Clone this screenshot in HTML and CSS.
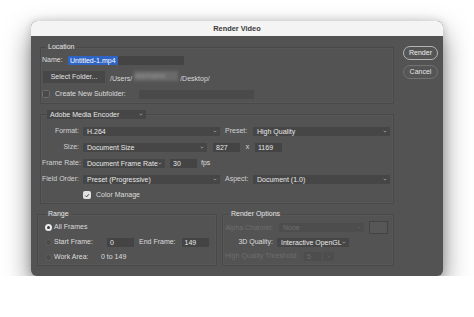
FILE: index.html
```html
<!DOCTYPE html>
<html lang="en">
<head>
    <meta charset="UTF-8">
    <title>Render Video</title>
    <link rel="stylesheet" href="styles.css">
</head>
<body>
<div class="page">
    <div class="dialog">
        <div class="titlebar">Render Video</div>
        <div class="content">
            <div class="main">
                <!-- Location -->
                <fieldset class="group location">
                    <legend>Location</legend>
                    <div class="row">
                        <span class="name-label">Name:</span>
                        <span class="field name-field"><span class="selected">Untitled-1.mp4</span></span>
                    </div>
                    <div class="row">
                        <span class="folder-btn">Select Folder...</span>
                        <span class="path">/Users/<span class="blurred">username</span>/Desktop/</span>
                    </div>
                    <div class="row">
                        <span class="check"></span>
                        <span class="check-label">Create New Subfolder:</span>
                        <span class="field subfolder-field"></span>
                    </div>
                </fieldset>

                <!-- Encoder -->
                <fieldset class="group encoder">
                    <legend class="select encoder-select">Adobe Media Encoder
                        <svg class="chev" viewBox="0 0 6 4"><path d="M1 1l2 2 2-2"/></svg>
                    </legend>
                    <div class="row">
                        <span class="lbl">Format:</span>
                        <span class="select w137">H.264 <svg class="chev" viewBox="0 0 6 4"><path d="M1 1l2 2 2-2"/></svg></span>
                        <span class="side-lbl">Preset:</span>
                        <span class="select w137">High Quality <svg class="chev" viewBox="0 0 6 4"><path d="M1 1l2 2 2-2"/></svg></span>
                    </div>
                    <div class="row">
                        <span class="lbl">Size:</span>
                        <span class="select w124">Document Size <svg class="chev" viewBox="0 0 6 4"><path d="M1 1l2 2 2-2"/></svg></span>
                        <span class="field num gap6">827</span>
                        <span class="times">x</span>
                        <span class="field num">1169</span>
                    </div>
                    <div class="row">
                        <span class="lbl">Frame Rate:</span>
                        <span class="select w82">Document Frame Rate <svg class="chev" viewBox="0 0 6 4"><path d="M1 1l2 2 2-2"/></svg></span>
                        <span class="field num gap5">30</span>
                        <span class="unit">fps</span>
                    </div>
                    <div class="row">
                        <span class="lbl">Field Order:</span>
                        <span class="select w137">Preset (Progressive) <svg class="chev" viewBox="0 0 6 4"><path d="M1 1l2 2 2-2"/></svg></span>
                        <span class="side-lbl">Aspect:</span>
                        <span class="select w137">Document (1.0) <svg class="chev" viewBox="0 0 6 4"><path d="M1 1l2 2 2-2"/></svg></span>
                    </div>
                    <div class="row manage-row">
                        <span class="check checked"><svg viewBox="0 0 8 8"><path d="M1.8 4.2l1.6 1.6 3-3.4"/></svg></span>
                        <span class="check-label">Color Manage</span>
                    </div>
                </fieldset>

                <div class="bottom">
                    <!-- Range -->
                    <fieldset class="group range">
                        <legend>Range</legend>
                        <div class="row">
                            <span class="radio on"></span>
                            <span class="radio-label">All Frames</span>
                        </div>
                        <div class="row">
                            <span class="radio"></span>
                            <span class="radio-label start-lbl">Start Frame:</span>
                            <span class="field num">0</span>
                            <span class="end-lbl">End Frame:</span>
                            <span class="field num">149</span>
                        </div>
                        <div class="row">
                            <span class="radio"></span>
                            <span class="radio-label work-lbl">Work Area:</span>
                            <span class="value">0 to 149</span>
                        </div>
                    </fieldset>

                    <!-- Render Options -->
                    <fieldset class="group options">
                        <legend>Render Options</legend>
                        <div class="row alpha-row">
                            <span class="opt-lbl off">Alpha Channel:</span>
                            <span class="select off w85">None <svg class="chev" viewBox="0 0 6 4"><path d="M1 1l2 2 2-2"/></svg></span>
                            <span class="swatch"></span>
                        </div>
                        <div class="row">
                            <span class="opt-lbl">3D Quality:</span>
                            <span class="select w72">Interactive OpenGL <svg class="chev" viewBox="0 0 6 4"><path d="M1 1l2 2 2-2"/></svg></span>
                        </div>
                        <div class="row">
                            <span class="threshold-lbl off">High Quality Threshold:</span>
                            <span class="stepper off"><span class="step-val">5</span><span class="step-btn"><svg class="chev" viewBox="0 0 6 4"><path d="M1 1l2 2 2-2"/></svg></span></span>
                        </div>
                    </fieldset>
                </div>
            </div>

            <div class="buttons">
                <span class="pill default">Render</span>
                <span class="pill">Cancel</span>
            </div>
        </div>
    </div>
</div>
</body>
</html>
```

FILE: styles.css
```css
/* Page */
body {
    margin: 0;
    background: #ffffff;
    font-family: "Liberation Sans", Arial, sans-serif;
    font-size: 7px;
    line-height: 10px;
    color: #dcdcdc;
}

.page {
    padding: 21px 0 0 31px;
}

/* Dialog window */
.dialog {
    width: 412px;
    height: 255px;
    border-radius: 6px;
    overflow: hidden;
    background: #535353;
    box-shadow: 0 12px 26px rgba(0, 0, 0, 0.5), 0 0 9px rgba(0, 0, 0, 0.16);
}

.titlebar {
    height: 15px;
    line-height: 15px;
    background: #f4f4f4;
    color: #3a3a3a;
    font-weight: bold;
    font-size: 7.4px;
    text-align: center;
}

.content {
    display: flex;
    padding: 6px 5px 0 9px;
}

.main {
    width: 354px;
}

.buttons {
    display: flex;
    flex-direction: column;
    gap: 5px;
    margin: 4px 0 0 9px;
}

.pill {
    width: 35px;
    height: 14px;
    box-sizing: border-box;
    border: 1px solid #727272;
    border-radius: 7px;
    text-align: center;
    line-height: 12px;
    color: #e4e4e4;
    background: #555555;
}

.pill.default {
    border-color: #b4b4b4;
    color: #f0f0f0;
}

/* Group boxes */
.group {
    margin: 0;
    border: 1px solid #494949;
    box-shadow: inset 0 0 0 1px #575757;
    min-width: 0;
}

.group legend {
    line-height: 10px;
    padding: 0 2px;
    color: #e6e6e6;
}

.row {
    display: flex;
    align-items: center;
    height: 10px;
    white-space: nowrap;
}

/* Location */
.location {
    padding: 3px 1px 4px 1px;
}

.location legend {
    margin-left: 4px;
}

.location .row + .row {
    margin-top: 6px;
}

.location .row:nth-child(3) {
    height: 12px;
}

.name-label {
    width: 26px;
}

.field {
    display: block;
    height: 9px;
    line-height: 9px;
    background: #444444;
    color: #e8e8e8;
}

.name-field {
    width: 116px;
}

.selected {
    display: inline-block;
    padding: 0 2px;
    background: #2f64c5;
    color: #ffffff;
}

.folder-btn {
    width: 62px;
    height: 12px;
    line-height: 12px;
    margin-left: 1px;
    background: #474747;
    text-align: center;
    color: #e2e2e2;
}

.path {
    margin-left: 5px;
    color: #d8d8d8;
}

.blurred {
    display: inline-block;
    width: 44px;
    margin: 0 2px;
    color: #9a9a9a;
    background: #6a6a6a;
    filter: blur(1.4px);
    overflow: hidden;
}

.check {
    display: flex;
    align-items: center;
    justify-content: center;
    width: 6px;
    height: 6px;
    border: 1px solid #6c6c6c;
    border-radius: 1.5px;
    background: #4a4a4a;
}

.check.checked {
    background: #e2e2e2;
    border-color: #e2e2e2;
}

.check svg {
    width: 7px;
    height: 7px;
    fill: none;
    stroke: #3a3a3a;
    stroke-width: 1.3;
}

.check-label {
    margin-left: 5px;
}

.subfolder-field {
    width: 115px;
    margin-left: 13px;
    background: #4a4a4a;
}

/* Encoder */
.encoder {
    margin-top: 6px;
    padding: 7px 1px 3px 1px;
}

.encoder .row + .row {
    margin-top: 6px;
}

.encoder .manage-row {
    margin-top: 7px;
    padding-left: 41px;
}

.select {
    display: flex;
    align-items: center;
    justify-content: space-between;
    box-sizing: border-box;
    height: 9px;
    line-height: 9px;
    padding: 0 3px 0 4px;
    background: #464646;
    color: #e8e8e8;
}

.chev {
    width: 4px;
    height: 3px;
    fill: none;
    stroke: #b8b8b8;
    stroke-width: 1;
    flex: none;
}

.encoder legend.encoder-select {
    width: 99px;
    margin-left: 5px;
    padding: 0 3px;
    line-height: 9px;
    box-sizing: border-box;
}

.lbl {
    width: 37px;
    margin-right: 4px;
    text-align: right;
    color: #d2d2d2;
}

.side-lbl {
    width: 28px;
    margin-left: 5px;
    color: #d2d2d2;
}

.w137 { width: 137px; }
.w124 { width: 124px; }
.w82 { width: 82px; }
.w85 { width: 85px; }
.w72 { width: 72px; }

.num {
    width: 27px;
    padding-left: 3px;
    box-sizing: border-box;
}

.gap6 { margin-left: 6px; }
.gap5 { margin-left: 5px; }

.times {
    width: 15px;
    text-align: center;
}

.unit {
    margin-left: 4px;
}

/* Bottom groups */
.bottom {
    display: flex;
    gap: 5px;
    margin: 5px 0 0 -3px;
}

.range {
    width: 180px;
    box-sizing: border-box;
    padding: 3px 2px 3px 7px;
}

.range legend {
    margin-left: 1px;
}

.range .row + .row {
    margin-top: 5px;
}

.radio {
    width: 5px;
    height: 5px;
    border-radius: 50%;
    border: 1px solid #5f5f5f;
    background: #4b4b4b;
}

.radio.on {
    width: 3px;
    height: 3px;
    border: 2px solid #ececec;
    background: #3c3c3c;
}

.radio-label {
    margin-left: 2px;
}

.start-lbl { width: 53px; }
.work-lbl { width: 47px; }

.end-lbl {
    margin: 0 6px 0 5px;
}

.options {
    flex: 1;
    padding: 2px 2px 3px 2px;
}

.options legend {
    margin-left: 4px;
}

.options .row + .row {
    margin-top: 3px;
}

.options .row:last-child {
    margin-top: 4px;
}

.alpha-row {
    height: 13px;
}

.opt-lbl {
    width: 48px;
    margin-right: 4px;
    text-align: right;
}

.alpha-row .select {
    margin-left: 2px;
}

.off {
    color: #6e6e6e;
}

.select.off {
    background: #4d4d4d;
    color: #6e6e6e;
}

.select.off .chev,
.stepper.off .chev {
    stroke: #6a6a6a;
}

.swatch {
    width: 19px;
    height: 13px;
    box-sizing: border-box;
    margin-left: 5px;
    border: 1px solid #434343;
    background: #575757;
}

.threshold-lbl {
    width: 79px;
}

.stepper {
    display: flex;
    height: 9px;
    line-height: 9px;
    background: #4d4d4d;
}

.step-val {
    width: 18px;
    padding-left: 3px;
    box-sizing: border-box;
}

.step-btn {
    display: flex;
    align-items: center;
    justify-content: center;
    width: 11px;
    border-left: 1px solid #555555;
}
```
